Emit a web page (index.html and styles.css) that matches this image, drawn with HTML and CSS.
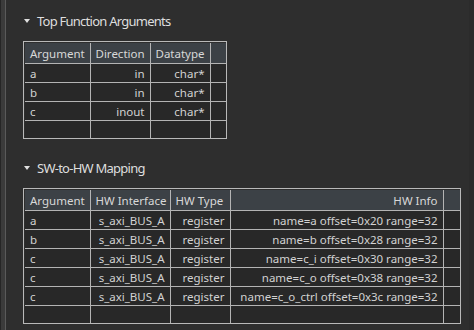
FILE: index.html
```html
<!DOCTYPE html>
<html>
<head>
<meta charset="utf-8">
<link rel="stylesheet" href="styles.css">
</head>
<body>
<div class="frame">
  <div class="edge"></div>
  <div class="content">
    <section class="section">
      <div class="title"><span class="caret"></span>Top Function Arguments</div>
      <div class="box box-top">
        <table class="grid">
          <colgroup><col style="width:65px"><col style="width:60px"><col style="width:60px"><col></colgroup>
          <thead><tr><th>Argument</th><th>Direction</th><th>Datatype</th><th class="filler"></th></tr></thead>
          <tbody>
            <tr><td>a</td><td class="r">in</td><td class="r">char*</td><td></td></tr>
            <tr><td>b</td><td class="r">in</td><td class="r">char*</td><td></td></tr>
            <tr><td>c</td><td class="r">inout</td><td class="r">char*</td><td></td></tr>
            <tr class="empty"><td></td><td></td><td></td><td></td></tr>
          </tbody>
        </table>
      </div>
    </section>
    <section class="section second">
      <div class="title"><span class="caret"></span>SW-to-HW Mapping</div>
      <div class="box box-map">
        <table class="grid">
          <colgroup><col style="width:65px"><col style="width:80px"><col style="width:60px"><col style="width:213px"><col></colgroup>
          <thead><tr><th>Argument</th><th>HW Interface</th><th>HW Type</th><th class="r">HW Info</th><th class="filler"></th></tr></thead>
          <tbody>
            <tr><td>a</td><td class="r">s_axi_BUS_A</td><td class="r">register</td><td class="r">name=a offset=0x20 range=32</td><td></td></tr>
            <tr><td>b</td><td class="r">s_axi_BUS_A</td><td class="r">register</td><td class="r">name=b offset=0x28 range=32</td><td></td></tr>
            <tr><td>c</td><td class="r">s_axi_BUS_A</td><td class="r">register</td><td class="r">name=c_i offset=0x30 range=32</td><td></td></tr>
            <tr><td>c</td><td class="r">s_axi_BUS_A</td><td class="r">register</td><td class="r">name=c_o offset=0x38 range=32</td><td></td></tr>
            <tr><td>c</td><td class="r">s_axi_BUS_A</td><td class="r">register</td><td class="r">name=c_o_ctrl offset=0x3c range=32</td><td></td></tr>
            <tr class="empty"><td></td><td></td><td></td><td></td><td></td></tr>
          </tbody>
        </table>
      </div>
    </section>
  </div>
  <div class="rightedge"></div>
</div>
</body>
</html>
```
FILE: styles.css
```css
html, body {
  margin: 0;
  padding: 0;
  background: #2e2e2e;
}
.frame {
  display: flex;
  width: 474px;
  height: 330px;
  overflow: hidden;
  font-family: "Noto Sans", "Open Sans", sans-serif;
  color: #d2d2d2;
}
.edge {
  width: 6px;
  flex: none;
  background: #3b3b3b;
  border-left: 1px solid #262626;
  border-right: 1px solid #5a5a5a;
  box-sizing: border-box;
}
.content {
  flex: 1;
  padding: 12px 0 0 17px;
}
.rightedge {
  width: 5px;
  flex: none;
  background: #2b2b2b;
}
.title {
  display: flex;
  align-items: center;
  height: 18px;
  font-size: 13px;
  letter-spacing: -0.75px;
  color: #dedede;
}
.caret {
  width: 0;
  height: 0;
  border-left: 3.5px solid transparent;
  border-right: 3.5px solid transparent;
  border-top: 4px solid #e0e0e0;
  margin: 0 7px 0 1px;
}
.box {
  margin-top: 11px;
  border: 1px solid #b9b9b9;
  padding: 1px 0 0 1px;
}
.box-top { width: 201px; }
.box-map { width: 435px; }
.second { margin-top: 20px; }
.grid {
  border-collapse: collapse;
  table-layout: fixed;
  width: 100%;
  font-size: 11.5px;
}
.grid th, .grid td {
  border-right: 1px solid #b4b4b4;
  border-bottom: 1px solid #b4b4b4;
  padding: 0 5px 0 5px;
  white-space: nowrap;
  overflow: hidden;
  text-align: left;
  font-weight: normal;
}
.grid tr > *:last-child { border-right: none; }
.grid th {
  background: #3c4146;
  color: #d8d8d8;
  height: 20px;
}
.grid td {
  background: #282828;
  height: 18px;
}
.grid .r { text-align: right; }
.grid tr.empty td { height: 17px; border-bottom: none; }
```
